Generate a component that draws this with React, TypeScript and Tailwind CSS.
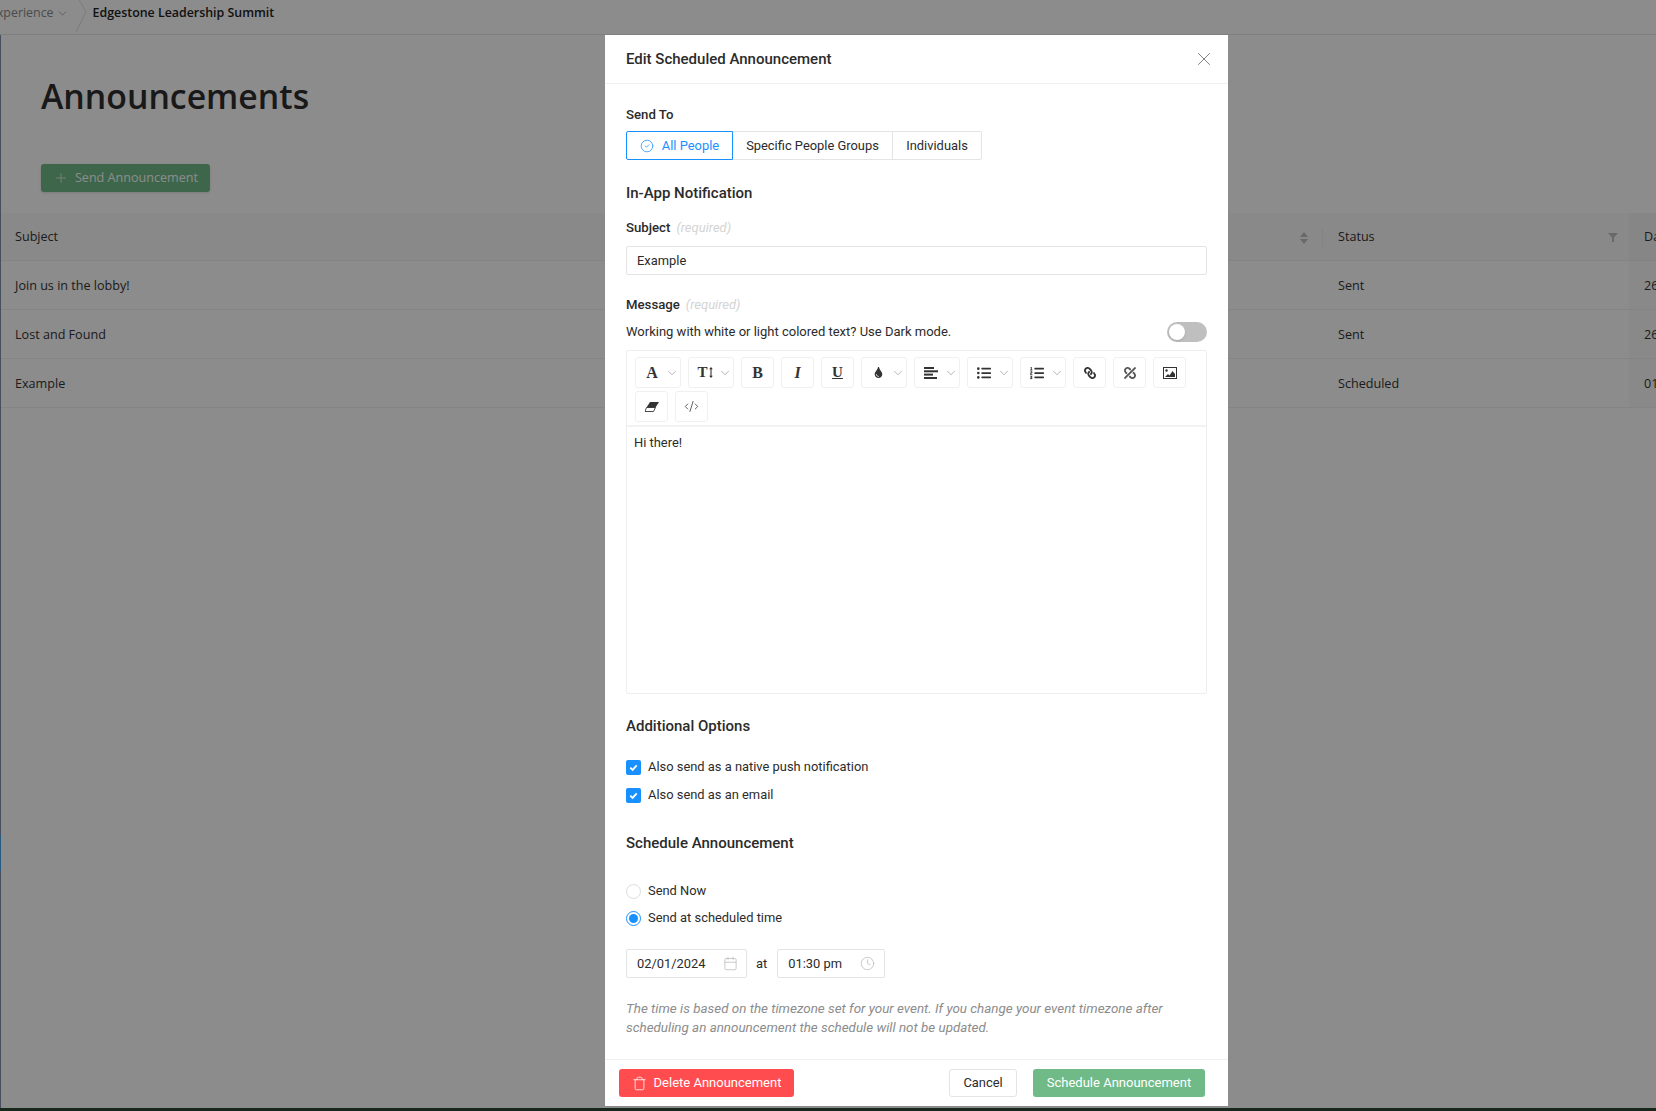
import { Calendar, ChevronDown, CircleCheck, Clock, CodeXml, Plus, Trash, X } from 'lucide-react';
import { FaLink, FaListOl, FaListUl, FaTint, FaUnlink } from 'react-icons/fa';
import type { ReactNode } from 'react';

const rows = [
  { subject: 'Join us in the lobby!', status: 'Sent', date: '26' },
  { subject: 'Lost and Found', status: 'Sent', date: '26' },
  { subject: 'Example', status: 'Scheduled', date: '01' },
];

function ToolButton({ children, caret }: { children: ReactNode; caret?: boolean }) {
  return (
    <div
      className={`flex h-[31px] items-center rounded-[3px] border border-[#f0f0f0] text-[#333] ${
        caret ? 'w-[46px] pl-[8px]' : 'w-[33px] justify-center'
      }`}
    >
      <span className={`flex items-center justify-center ${caret ? 'w-[16px]' : ''}`}>{children}</span>
      {caret && <ChevronDown className="ml-auto mr-[1px] h-[14px] w-[14px] text-[#999]" strokeWidth={1.25} />}
    </div>
  );
}

function AlignIcon() {
  return (
    <svg viewBox="0 0 14 12" className="h-[12px] w-[14px]" fill="#333">
      <rect x="0" y="0" width="10" height="2" />
      <rect x="0" y="3.3" width="14" height="2" />
      <rect x="0" y="6.6" width="9" height="2" />
      <rect x="0" y="10" width="13" height="2" />
    </svg>
  );
}

function ImageIcon() {
  return (
    <svg viewBox="0 0 14 12" className="h-[12px] w-[14px]">
      <rect x="0.5" y="0.5" width="13" height="11" fill="none" stroke="#333" />
      <circle cx="3.5" cy="3.5" r="1.2" fill="#333" />
      <path d="M2 10l3-3 1.5 1.5L9.5 4 12 7v3z" fill="#333" />
    </svg>
  );
}

function EraserIcon() {
  return (
    <svg viewBox="0 0 14 10" className="h-[10px] w-[14px]">
      <path d="M5 0h9l-3.5 5.5h-9z" fill="#333" />
      <path d="M1.5 5.5h9L8.5 9.5H0z" fill="none" stroke="#333" strokeWidth="0.9" />
    </svg>
  );
}

function TextHeightIcon() {
  return (
    <span className="flex items-center font-['Liberation_Serif',serif] text-[15px] font-bold leading-none">
      T
      <svg viewBox="0 0 4 12" className="ml-px h-[11px] w-[4px]" fill="#333">
        <path d="M2 0l2 2.5H2.6v7H4L2 12 0 9.5h1.4v-7H0z" />
      </svg>
    </span>
  );
}

function Checkbox({ label }: { label: string }) {
  return (
    <div className="flex h-[20px] items-center gap-[7px]">
      <span className="flex h-[15px] w-[15px] items-center justify-center rounded-[2px] bg-[#1890ff]">
        <svg viewBox="0 0 12 12" className="h-[11px] w-[11px]" fill="none" stroke="#fff" strokeWidth="2">
          <path d="M2.5 6.2l2.5 2.5 4.5-5" />
        </svg>
      </span>
      <span>{label}</span>
    </div>
  );
}

function Radio({ label, checked }: { label: string; checked?: boolean }) {
  return (
    <div className="flex h-[20px] items-center gap-[7px]">
      <span
        className={`flex h-[15px] w-[15px] items-center justify-center rounded-full border bg-white ${
          checked ? 'border-[#1890ff]' : 'border-[#dcdcdc]'
        }`}
      >
        {checked && <span className="h-[9px] w-[9px] rounded-full bg-[#1890ff]" />}
      </span>
      <span>{label}</span>
    </div>
  );
}

function FooterButton({ children, className }: { children: ReactNode; className: string }) {
  return (
    <button type="button" className={`flex h-[28px] items-center justify-center rounded-[3px] ${className}`}>
      {children}
    </button>
  );
}

function Page() {
  return (
    <div className="h-[1111px] overflow-hidden bg-white font-['Open_Sans',sans-serif] text-[12.6px] text-[#333]">
      <div className="flex h-[35px] items-center overflow-hidden border-b border-[#e8e8e8] pb-[7px] text-[12.4px]">
        <span className="ml-[-10px] text-[#8a8a8a]">Experience</span>
        <ChevronDown className="ml-[2px] h-[13px] w-[13px] text-[#8a8a8a]" strokeWidth={1.25} />
        <svg viewBox="0 0 12 36" className="ml-[6px] h-[36px] w-[12px]" fill="none" stroke="#e0e0e0">
          <path d="M1 -2l10 18L1 36" />
        </svg>
        <span className="ml-[6px] font-semibold text-[#222]">Edgestone Leadership Summit</span>
      </div>
      <div className="flex h-[1073px]">
        <div className="flex w-px flex-col bg-[#7f93a8]">
          <div className="mt-[800px] h-[36px] bg-[#4aa3e8]" />
        </div>
        <div className="min-w-0 flex-1">
          <h1 className="ml-[40px] mt-[38px] text-[33.8px] font-semibold leading-[46px] text-[#2e2e2e]">Announcements</h1>
          <button
            type="button"
            className="ml-[40px] mt-[45px] flex h-[28px] w-[169px] items-center justify-center rounded-[3px] bg-[#6fba87] text-white shadow-sm"
          >
            <Plus className="mr-[6px] h-[16px] w-[16px]" strokeWidth={1} />
            Send Announcement
          </button>
          <div className="mt-[21px] grid grid-cols-[1322px_306px_1fr] text-[#333]">
            <div className="flex h-[48px] items-center border-b border-[#eee] bg-[#fafafa] pl-[14px] pt-[2px]">
              Subject
              <svg viewBox="0 0 8 12" className="ml-auto h-[12px] w-[8px]" fill="#bfbfbf">
                <path d="M4 0l4 5H0zM4 12L0 7h8z" />
              </svg>
              <span className="ml-[14px] h-[20px] w-px bg-[#eee]" />
            </div>
            <div className="flex h-[48px] items-center border-b border-[#eee] bg-[#fafafa] pl-[15px] pr-[11px] pt-[2px]">
              Status
              <svg viewBox="0 0 10 9" className="ml-auto h-[9px] w-[10px]" fill="#bfbfbf">
                <path d="M0 0h10L6 4.5V9H4V4.5z" />
              </svg>
            </div>
            <div className="flex h-[48px] items-center border-b border-[#eee] bg-[#f5f5f5] pl-[15px] pt-[2px]">Date</div>
            {rows.map((row) => (
              <div key={row.subject} className="contents">
                <div className="flex h-[49px] items-center border-b border-[#f0f0f0] pl-[14px] pt-[3px]">{row.subject}</div>
                <div className="flex h-[49px] items-center border-b border-[#f0f0f0] pl-[15px] pt-[3px]">{row.status}</div>
                <div className="flex h-[49px] items-center border-b border-[#f0f0f0] bg-[#fafafa] pl-[15px] pt-[3px]">
                  {row.date}
                </div>
              </div>
            ))}
          </div>
        </div>
      </div>
      <div className="h-[3px] bg-[#2f4a35]" />
    </div>
  );
}

function Modal() {
  return (
    <div className="absolute left-[605px] top-[35px] flex h-[1071px] w-[623px] flex-col bg-white font-['Roboto',sans-serif] text-[12.9px] text-[#2b2b2b]">
      <div className="flex h-[49px] items-center justify-between border-b border-[#f0f0f0] pl-[21px] pr-[13px]">
        <span className="text-[15px] font-medium">Edit Scheduled Announcement</span>
        <X className="h-[22px] w-[22px] text-[#777]" strokeWidth={1} />
      </div>

      <div className="flex-1 px-[21px]">
        <div className="mt-[21px] h-[20px] text-[13.2px] font-medium leading-[20px]">Send To</div>
        <div className="mt-[6px] flex h-[29px]">
          <div className="flex w-[107px] items-center justify-center gap-[8px] rounded-l-[2px] border border-[#1890ff] text-[#1890ff]">
            <CircleCheck className="h-[14px] w-[14px]" strokeWidth={1.25} />
            All People
          </div>
          <div className="flex w-[160px] items-center justify-center border-y border-r border-[#e4e4e4]">
            Specific People Groups
          </div>
          <div className="flex w-[89px] items-center justify-center rounded-r-[2px] border-y border-r border-[#e4e4e4]">
            Individuals
          </div>
        </div>

        <div className="mt-[22px] h-[22px] text-[15px] font-medium leading-[22px]">In-App Notification</div>
        <div className="mt-[14px] flex h-[20px] items-center gap-[6px] text-[13.2px] font-medium">
          Subject <span className="text-[13px] font-normal italic text-[#d4d4d4]">(required)</span>
        </div>
        <div className="mt-[8px] flex h-[29px] items-center rounded-[2px] border border-[#e4e4e4] px-[10px]">Example</div>

        <div className="mt-[20px] flex h-[20px] items-center gap-[6px] text-[13.2px] font-medium">
          Message <span className="text-[13px] font-normal italic text-[#d4d4d4]">(required)</span>
        </div>
        <div className="mt-[7px] flex h-[20px] items-center justify-between text-[13px]">
          Working with white or light colored text? Use Dark mode.
          <span className="flex h-[20px] w-[40px] items-center rounded-full bg-[#bfbfbf] pl-[2px]">
            <span className="h-[16px] w-[16px] rounded-full bg-white shadow" />
          </span>
        </div>

        <div className="mt-[8px] flex h-[344px] flex-col rounded-[2px] border border-[#eee]">
          <div className="flex h-[76px] flex-wrap content-start gap-x-[7px] gap-y-[3px] border-b-2 border-[#f2f2f2] px-[8px] pt-[6px]">
            <ToolButton caret>
              <span className="font-['Liberation_Serif',serif] text-[16px] font-bold leading-none">A</span>
            </ToolButton>
            <ToolButton caret>
              <TextHeightIcon />
            </ToolButton>
            <ToolButton>
              <span className="font-['Liberation_Serif',serif] text-[16px] font-bold leading-none">B</span>
            </ToolButton>
            <ToolButton>
              <span className="font-['Liberation_Serif',serif] text-[16px] font-bold italic leading-none">I</span>
            </ToolButton>
            <ToolButton>
              <span className="font-['Liberation_Serif',serif] text-[15px] font-bold leading-none underline">U</span>
            </ToolButton>
            <ToolButton caret>
              <FaTint className="h-[11px] w-[11px]" />
            </ToolButton>
            <ToolButton caret>
              <AlignIcon />
            </ToolButton>
            <ToolButton caret>
              <FaListUl className="h-[14px] w-[14px]" />
            </ToolButton>
            <ToolButton caret>
              <FaListOl className="h-[14px] w-[14px]" />
            </ToolButton>
            <ToolButton>
              <FaLink className="h-[12px] w-[12px] -scale-x-100" />
            </ToolButton>
            <ToolButton>
              <FaUnlink className="h-[12px] w-[12px] -scale-x-100 text-[#555]" />
            </ToolButton>
            <ToolButton>
              <ImageIcon />
            </ToolButton>
            <ToolButton>
              <EraserIcon />
            </ToolButton>
            <ToolButton>
              <CodeXml className="h-[15px] w-[15px]" strokeWidth={1.25} />
            </ToolButton>
          </div>
          <div className="px-[7px] pt-[6px] leading-[20px]">Hi there!</div>
        </div>

        <div className="mt-[21px] h-[22px] text-[15px] font-medium leading-[22px]">Additional Options</div>
        <div className="mt-[20px] flex flex-col gap-[8px]">
          <Checkbox label="Also send as a native push notification" />
          <Checkbox label="Also send as an email" />
        </div>

        <div className="mt-[27px] h-[22px] text-[15px] font-medium leading-[22px]">Schedule Announcement</div>
        <div className="mt-[27px] flex flex-col gap-[7px]">
          <Radio label="Send Now" />
          <Radio checked label="Send at scheduled time" />
        </div>

        <div className="mt-[21px] flex h-[29px] items-center">
          <div className="flex h-full w-[121px] items-center justify-between rounded-[2px] border border-[#e4e4e4] pl-[10px] pr-[8px]">
            02/01/2024
            <Calendar className="h-[15px] w-[15px] text-[#bdbdbd]" strokeWidth={1.25} />
          </div>
          <span className="ml-[9px] mr-[10px]">at</span>
          <div className="flex h-full w-[108px] items-center justify-between rounded-[2px] border border-[#e4e4e4] pl-[10px] pr-[9px]">
            01:30 pm
            <Clock className="h-[15px] w-[15px] text-[#bdbdbd]" strokeWidth={1.25} />
          </div>
        </div>

        <p className="mt-[21px] text-[13.4px] italic leading-[19px] text-[#8c8c8c]">
          The time is based on the timezone set for your event. If you change your event timezone after
          <br />
          scheduling an announcement the schedule will not be updated.
        </p>
      </div>

      <div className="flex h-[47px] items-start border-t border-[#f0f0f0] pl-[14px] pr-[23px] pt-[9px]">
        <FooterButton className="w-[175px] gap-[7px] bg-[#ff4d4f] text-[13px] text-white">
          <Trash className="h-[15px] w-[15px]" strokeWidth={1.25} />
          Delete Announcement
        </FooterButton>
        <FooterButton className="ml-auto w-[68px] border border-[#e4e4e4] text-[#2b2b2b]">Cancel</FooterButton>
        <FooterButton className="ml-[16px] w-[172px] bg-[#6fba87] text-[13px] text-white">
          Schedule Announcement
        </FooterButton>
      </div>
    </div>
  );
}

export default function App() {
  return (
    <div className="relative h-[1111px] w-[1656px] overflow-hidden">
      <Page />
      <div className="absolute inset-0 bg-black/45" />
      <Modal />
    </div>
  );
}
